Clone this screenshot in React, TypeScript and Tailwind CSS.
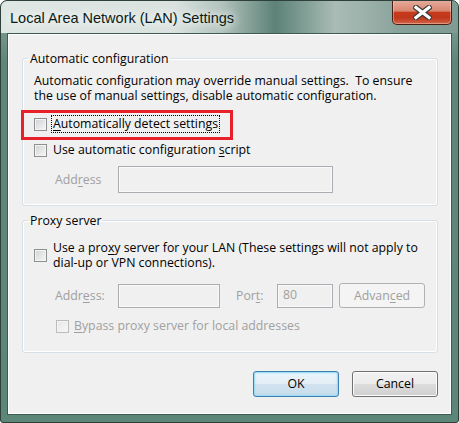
import React from "react"

function Checkbox({ disabled = false }: { disabled?: boolean }) {
  return (
    <span
      className={`block h-[13px] w-[13px] shrink-0 border ${
        disabled
          ? "border-[#bcbcbc] bg-[linear-gradient(135deg,#e6e6e6,#f8f8f8)]"
          : "border-[#8e8f8f] bg-[linear-gradient(135deg,#d0d2d4,#f7f7f7)]"
      } shadow-[inset_0_0_0_1px_#f4f4f4]`}
    />
  )
}

function Field({ className = "", children }: { className?: string; children?: React.ReactNode }) {
  return (
    <div className={`border border-[#abadb3] bg-[#f0f0f0] shadow-[inset_0_0_0_1px_#f8f8f8] ${className}`}>
      {children}
    </div>
  )
}

function CloseGlyph() {
  return (
    <svg width="19" height="15" viewBox="0 0 19 15">
      <path d="M3 2.5 L16 12.5 M16 2.5 L3 12.5" stroke="#3b3b3b" strokeWidth="5.5" strokeLinecap="square" />
      <path d="M3 2.5 L16 12.5 M16 2.5 L3 12.5" stroke="#ffffff" strokeWidth="3.2" strokeLinecap="square" />
    </svg>
  )
}

export default function App() {
  const dim = "text-[#a0a0a0]"

  return (
    <div className="w-[459px] h-[423px] flex flex-col rounded-t-[7px] rounded-b-[3px] border border-[#2f403b] bg-[#66907f] bg-[linear-gradient(180deg,#8aa79d_0px,#5f8779_60px,#5c8678_100%)] font-['Open_Sans','Liberation_Sans',sans-serif] text-[12.3px] text-black overflow-hidden">
      {/* Title bar */}
      <div className="h-[32px] shrink-0 flex items-start justify-between rounded-t-[6px] bg-[linear-gradient(90deg,#dfe7e4_0%,#d9e2df_38%,#b3c4be_48%,#5d8277_60%,#7e9c93_66%,#a9bcb5_73%,#9bb1aa_80%,#86a199_88%,#7f9b93_100%)]">
        <div className="pl-[9px] pt-[7px] font-['Liberation_Sans',Arial,sans-serif] text-[14.5px] leading-[20px] text-[#0b1a14] [text-shadow:0_0_8px_#ffffff,0_0_12px_#ffffff]">
          Local Area Network (LAN) Settings
        </div>
        <div className="mr-[6px] -mt-px h-[25px] w-[60px] flex items-center justify-center rounded-b-[5px] border border-t-0 border-[#4b1e15] bg-[linear-gradient(180deg,#e6ae9e_0%,#d98670_46%,#c7391d_52%,#c0371c_74%,#d06447_100%)] shadow-[inset_0_0_0_1px_rgba(255,215,205,0.45)]">
          <CloseGlyph />
        </div>
      </div>

      {/* Client area */}
      <div className="mx-[6px] mb-[7px] flex-1 flex flex-col border border-[#3d5a52] bg-[#f0f0f0] shadow-[inset_0_0_0_1px_#ffffff] pl-[14px] pr-[13px] pt-[17px]">
        {/* Automatic configuration */}
        <fieldset className="rounded-[3px] border border-[#d5dfe5] shadow-[inset_0_0_0_1px_#ffffff]">
          <legend className="ml-[5px] px-[2px] leading-[15px]">Automatic configuration</legend>
          <div className="pl-[11px] pt-[7px] pb-[12px]">
            <div className="leading-[15px]">
              Automatic configuration may override manual settings.&nbsp; To ensure
              <br />
              the use of manual settings, disable automatic configuration.
            </div>

            <div className="relative mt-[12px] flex items-center gap-[4px]">
              <Checkbox />
              <span className="border border-dotted border-black px-px leading-[16px]">
                <span className="underline underline-offset-2">A</span>utomatically detect settings
              </span>
              <div className="pointer-events-none absolute left-[-13px] top-[-5px] h-[30px] w-[212px] border-[3px] border-[#e8202a]" />
            </div>

            <div className="mt-[8px] flex items-center gap-[6px] leading-[18px]">
              <Checkbox />
              <span>
                Use automatic configuration <span className="underline underline-offset-2">s</span>cript
              </span>
            </div>

            <div className="mt-[7px] flex items-center pl-[21px]">
              <span className={`w-[63px] leading-[15px] ${dim}`}>
                Add<span className="underline underline-offset-2">r</span>ess
              </span>
              <Field className="h-[27px] w-[215px]" />
            </div>
          </div>
        </fieldset>

        {/* Proxy server */}
        <fieldset className="mt-[7px] rounded-[3px] border border-[#d5dfe5] shadow-[inset_0_0_0_1px_#ffffff]">
          <legend className="ml-[5px] px-[2px] leading-[15px]">Proxy server</legend>
          <div className="pl-[11px] pt-[12px] pb-[18px]">
            <div className="flex items-center gap-[6px]">
              <Checkbox />
              <span className="leading-[15px]">
                Use a pro<span className="underline underline-offset-2">x</span>y server for your LAN (These settings will not apply to
                <br />
                dial-up or VPN connections).
              </span>
            </div>

            <div className="mt-[13px] flex items-center pl-[21px]">
              <span className={`w-[63px] leading-[15px] ${dim}`}>
                Addr<span className="underline underline-offset-2">e</span>ss:
              </span>
              <Field className="h-[24px] w-[102px]" />
              <span className={`ml-[16px] w-[41px] leading-[15px] ${dim}`}>
                Por<span className="underline underline-offset-2">t</span>:
              </span>
              <Field className={`h-[24px] w-[56px] flex items-center pl-[5px] ${dim}`}>80</Field>
              <div className={`ml-[6px] h-[25px] w-[86px] flex items-center justify-center rounded-[3px] border border-[#adb2b5] bg-[#f4f4f4] pt-px ${dim}`}>
                Advan<span className="underline underline-offset-2">c</span>ed
              </div>
            </div>

            <div className="mt-[10px] flex items-center gap-[5px] pl-[22px] leading-[16px]">
              <Checkbox disabled />
              <span className={dim}>
                <span className="underline underline-offset-2">B</span>ypass proxy server for local addresses
              </span>
            </div>
          </div>
        </fieldset>

        {/* Buttons */}
        <div className="mt-[18px] flex justify-end gap-[13px]">
          <button className="h-[26px] w-[86px] rounded-[3px] border border-[#3c7fb1] bg-[linear-gradient(180deg,#eaf4fa_0%,#e2eef6_50%,#d2e3ef_50%,#c8dcea_100%)] shadow-[inset_0_0_0_1px_#9fdcf6,inset_0_0_3px_#7fcff2]">
            OK
          </button>
          <button className="h-[26px] w-[86px] rounded-[3px] border border-[#707070] bg-[linear-gradient(180deg,#f2f2f2_0%,#ebebeb_50%,#dddddd_50%,#cfcfcf_100%)] shadow-[inset_0_0_0_1px_#fcfcfc]">
            Cancel
          </button>
        </div>
      </div>
    </div>
  )
}
